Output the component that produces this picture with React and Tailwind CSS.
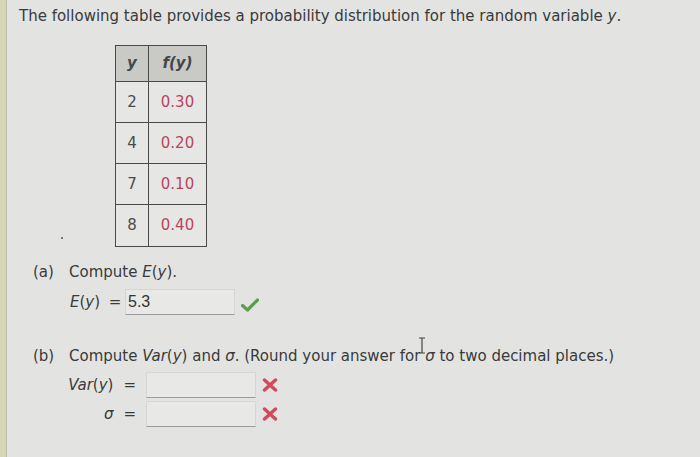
import React from "react";

function Check() {
  return (
    <svg width="18" height="14" viewBox="0 0 18 14" className="mt-[6px]">
      <path d="M1.5 7.5 L6.5 12 L16.5 2" fill="none" stroke="#5c9e4c" strokeWidth="3.2" strokeLinecap="round" strokeLinejoin="round" />
    </svg>
  );
}

function Cross() {
  return (
    <svg width="16" height="14" viewBox="0 0 16 14">
      <path d="M2.5 2 L13.5 12 M13.5 2 L2.5 12" fill="none" stroke="#d2485c" strokeWidth="3.4" strokeLinecap="round" />
    </svg>
  );
}

function Box({ children, w = "w-[110px]" }) {
  return (
    <div className={`${w} h-[26px] bg-[#e8e9e6] border border-[#d6d7d3] border-b-[#9c9d99] flex items-center px-[2px] text-[16px] text-[#333] font-['Liberation_Sans',sans-serif]`}>
      {children}
    </div>
  );
}

export default function App() {
  const rows = [
    ["2", "0.30"],
    ["4", "0.20"],
    ["7", "0.10"],
    ["8", "0.40"],
  ];
  return (
    <div className="w-[700px] h-[457px] bg-[#e3e4e1] flex overflow-hidden font-['DejaVu_Sans',sans-serif] text-[#393a3c] relative">
      <div className="w-[7px] bg-[#d5d8b2] border-r border-[#bdbfae]" />
      <div className="flex-1 flex flex-col pl-[12px] pt-[6px]">
        <div className="text-[15px] leading-[20px]">
          The following table provides a probability distribution for the random variable <i>y</i>.
        </div>

        <div className="ml-[96px] mt-[19px] w-[92px] border border-[#4a4a4a] text-[15px]">
          <div className="flex h-[36px] bg-[#c9cac5] border-b border-[#4a4a4a] font-bold italic text-[#44464a]">
            <div className="w-[33px] border-r border-[#4a4a4a] flex items-center justify-center">y</div>
            <div className="flex-1 flex items-center justify-center">f(y)</div>
          </div>
          {rows.map(([a, b], i) => (
            <div key={a} className={`flex h-[41px] bg-[#e6e7e4] ${i < 3 ? "border-b border-[#4a4a4a]" : ""}`}>
              <div className="w-[33px] border-r border-[#4a4a4a] flex items-center justify-center text-[#4a4b4e]">{a}</div>
              <div className="flex-1 flex items-center justify-center text-[#b8445e]">{b}</div>
            </div>
          ))}
        </div>

        <div className="flex mt-[15px] text-[15px] leading-[20px]">
          <div className="w-[50px] pl-[14px]">(a)</div>
          <div>
            Compute <i>E</i>(<i>y</i>).
          </div>
        </div>
        <div className="flex items-center ml-[51px] mt-[7px] text-[15px]">
          <div className="w-[55px]">
            <i>E</i>(<i>y</i>) <span className="ml-[4px]">=</span>
          </div>
          <Box>5.3</Box>
          <div className="ml-[6px]">
            <Check />
          </div>
        </div>

        <div className="flex mt-[31px] text-[15px] leading-[20px]">
          <div className="w-[50px] pl-[14px]">(b)</div>
          <div>
            Compute <i>Var</i>(<i>y</i>) and <i>σ</i>. (Round your answer for <i>σ</i> to two decimal places.)
          </div>
        </div>
        <div className="grid grid-cols-[76px_110px_auto] gap-y-[3px] ml-[51px] mt-[6px] text-[15px] items-center">
          <div className="flex justify-end pr-[10px]">
            <i>Var</i>(<i>y</i>)<span className="ml-[10px]">=</span>
          </div>
          <Box />
          <div className="ml-[6px]">
            <Cross />
          </div>
          <div className="flex justify-end pr-[10px]">
            <i>σ</i>
            <span className="ml-[10px]">=</span>
          </div>
          <Box />
          <div className="ml-[6px]">
            <Cross />
          </div>
        </div>
      </div>

      <div className="absolute left-[61px] top-[237px] w-[2px] h-[2px] rounded-full bg-[#555]" />
      <svg className="absolute left-[417px] top-[337px]" width="10" height="17" viewBox="0 0 10 17">
        <path d="M2 1 H8 M5 1 V16 M2 16 H8" fill="none" stroke="#444" strokeWidth="1.2" />
      </svg>
    </div>
  );
}
